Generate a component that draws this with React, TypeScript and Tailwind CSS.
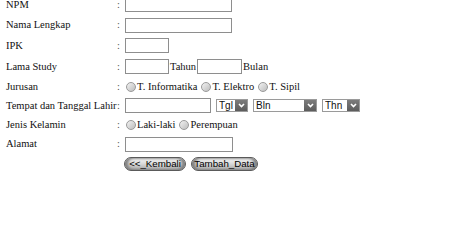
import React from "react";

const Row: React.FC<{ label: string; h: string; children?: React.ReactNode; noColon?: boolean }> = ({
  label,
  h,
  children,
  noColon,
}) => (
  <div className={`flex items-center ${h}`}>
    <div className="w-[116px] pl-[6px] whitespace-nowrap">{label}</div>
    <div className="w-[8px] pl-[1px] text-[#555]">{noColon ? "" : ":"}</div>
    <div className="flex items-center">{children}</div>
  </div>
);

const TextBox: React.FC<{ w: string }> = ({ w }) => (
  <input
    type="text"
    className={`${w} h-[15px] ml-[1px] border border-[#8e8e8e] bg-white outline-none`}
  />
);

const Radio: React.FC<{ name: string; label: string }> = ({ name, label }) => (
  <label className="flex items-center mr-[3px]">
    <input
      type="radio"
      name={name}
      className="appearance-none w-[10px] h-[10px] rounded-full border border-[#9a9a9a] bg-gradient-to-br from-[#f2f2f2] to-[#bdbdbd] mx-[1px]"
    />
    <span>{label}</span>
  </label>
);

const Select: React.FC<{ w: string; text: string }> = ({ w, text }) => (
  <div
    className={`${w} h-[13px] flex items-stretch border border-[#9a9a9a] bg-white font-['Liberation_Sans',Arial,sans-serif]`}
  >
    <select className="appearance-none flex-1 min-w-0 bg-white text-[10px] leading-[11px] pl-[2px] outline-none">
      <option>{text}</option>
    </select>
    <span className="w-[12px] flex items-center justify-center bg-gradient-to-b from-[#7c7c7c] to-[#5c5c5c]">
      <svg width="7" height="5" viewBox="0 0 7 5">
        <polyline points="1,1 3.5,3.6 6,1" fill="none" stroke="#ffffff" strokeWidth="1.6" />
      </svg>
    </span>
  </div>
);

const PillButton: React.FC<{ w: string; text: string }> = ({ w, text }) => (
  <button
    className={`${w} h-[14px] px-0 rounded-full border border-[#5a5a5a] bg-gradient-to-b from-[#fbfbfb] via-[#d8d8d8] to-[#a8a8a8] shadow-[inset_3px_0_3px_#808080,inset_-3px_0_3px_#808080] text-[9.7px] leading-[12px] text-black whitespace-nowrap font-['Liberation_Sans',Arial,sans-serif]`}
  >
    {text}
  </button>
);

export default function App() {
  return (
    <div className="w-[474px] h-[248px] bg-white text-[#111] text-[10.5px] overflow-hidden font-['Liberation_Serif','Times_New_Roman',serif]">
      <form className="-mt-[6px]">
        <Row label="NPM" h="h-[21px]">
          <TextBox w="w-[107px]" />
        </Row>
        <Row label="Nama Lengkap" h="h-[20px]">
          <TextBox w="w-[107px]" />
        </Row>
        <Row label="IPK" h="h-[21px]">
          <TextBox w="w-[44px]" />
        </Row>
        <Row label="Lama Study" h="h-[21px]">
          <TextBox w="w-[44px]" />
          <span className="mx-[1px]">Tahun</span>
          <input type="text" className="w-[45px] h-[15px] border border-[#8e8e8e] bg-white outline-none" />
          <span className="ml-[1px]">Bulan</span>
        </Row>
        <Row label="Jurusan" h="h-[19px]">
          <div className="ml-[1px] flex items-center">
            <Radio name="jurusan" label="T. Informatika" />
            <Radio name="jurusan" label="T. Elektro" />
            <Radio name="jurusan" label="T. Sipil" />
          </div>
        </Row>
        <Row label="Tempat dan Tanggal Lahir" h="h-[19px]">
          <TextBox w="w-[86px]" />
          <div className="flex items-center gap-[5px] ml-[5px]">
            <Select w="w-[32px]" text="Tgl" />
            <Select w="w-[64px]" text="Bln" />
            <Select w="w-[38px]" text="Thn" />
          </div>
        </Row>
        <Row label="Jenis Kelamin" h="h-[19px]">
          <div className="ml-[1px] flex items-center">
            <Radio name="jk" label="Laki-laki" />
            <Radio name="jk" label="Perempuan" />
          </div>
        </Row>
        <Row label="Alamat" h="h-[20px]">
          <TextBox w="w-[108px]" />
        </Row>
        <Row label="" h="h-[20px]" noColon>
          <div className="flex items-center gap-[5px]">
            <PillButton w="w-[62px]" text="<<_Kembali" />
            <PillButton w="w-[67px]" text="Tambah_Data" />
          </div>
        </Row>
      </form>
    </div>
  );
}
